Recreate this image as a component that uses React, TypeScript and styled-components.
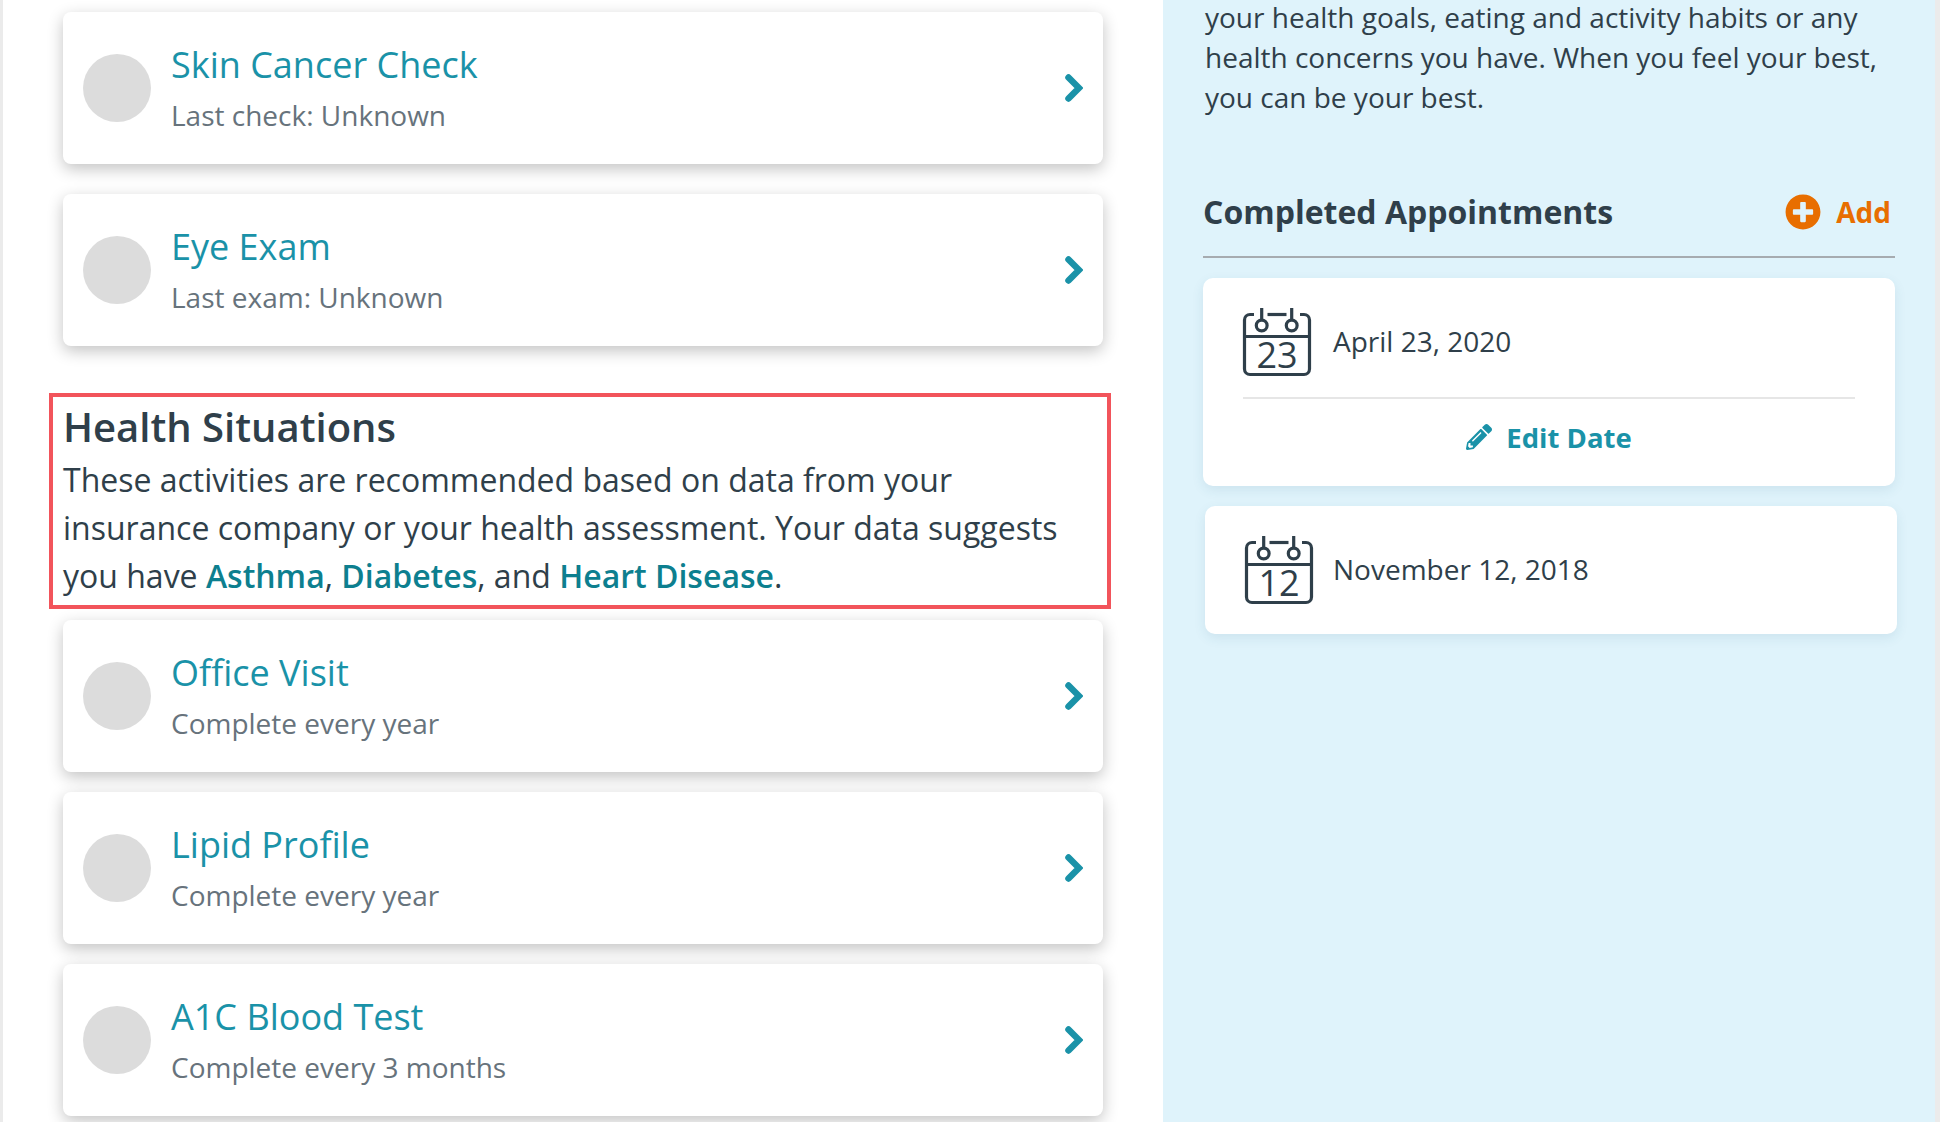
import React from 'react';
import styled, { createGlobalStyle } from 'styled-components';
import { FaPencilAlt, FaPlusCircle } from 'react-icons/fa';

const GlobalStyle = createGlobalStyle`
  html, body {
    margin: 0;
    padding: 0;
    height: 1122px;
    overflow: hidden;
    background: #ffffff;
  }
  * {
    box-sizing: border-box;
  }
`;

interface Activity {
  title: string;
  note: string;
}

interface Appointment {
  day: string;
  date: string;
  editable?: boolean;
}

const screenings: Activity[] = [
  { title: 'Skin Cancer Check', note: 'Last check: Unknown' },
  { title: 'Eye Exam', note: 'Last exam: Unknown' },
];

const situations: Activity[] = [
  { title: 'Office Visit', note: 'Complete every year' },
  { title: 'Lipid Profile', note: 'Complete every year' },
  { title: 'A1C Blood Test', note: 'Complete every 3 months' },
];

const appointments: Appointment[] = [
  { day: '23', date: 'April 23, 2020', editable: true },
  { day: '12', date: 'November 12, 2018' },
];

function Chevron() {
  return (
    <ChevronIcon viewBox="0 0 18 28" aria-hidden="true">
      <polyline points="3.5,3.5 14,14 3.5,24.5" fill="none" stroke="#1a92a8" strokeWidth="6.5" strokeLinecap="round" strokeLinejoin="miter" />
    </ChevronIcon>
  );
}

function CalendarIcon({ day }: { day: string }) {
  return (
    <CalendarSvg viewBox="0 0 68 68" aria-hidden="true">
      <g fill="none" stroke="#2f3f4a" strokeWidth="3.2">
        <path d="M11 6.5H7a5.5 5.5 0 0 0-5.5 5.5v49A5.5 5.5 0 0 0 7 66.5h54a5.5 5.5 0 0 0 5.5-5.5V12A5.5 5.5 0 0 0 61 6.5h-4" />
        <path d="M24.5 6.5h19" />
        <path d="M1.5 28.5h65" />
        <path d="M18.7 0v12M48.7 0v12" />
        <circle cx="18.7" cy="17.5" r="5.4" />
        <circle cx="48.7" cy="17.5" r="5.4" />
      </g>
      <DayText x="34" y="60" textAnchor="middle">
        {day}
      </DayText>
    </CalendarSvg>
  );
}

function ActivityCard({ title, note }: Activity) {
  return (
    <Card>
      <Dot />
      <CardText>
        <CardTitle>{title}</CardTitle>
        <CardNote>{note}</CardNote>
      </CardText>
      <Chevron />
    </Card>
  );
}

export default function App(): JSX.Element {
  return (
    <>
      <GlobalStyle />
      <Page>
        <MainColumn>
          <ScreeningList>
            {screenings.map((item) => (
              <ActivityCard key={item.title} {...item} />
            ))}
          </ScreeningList>
          <Highlight>
            <SectionTitle>Health Situations</SectionTitle>
            <SectionText>
              These activities are recommended based on data from your insurance company or your health assessment. Your data suggests you have{' '}
              <Condition>Asthma</Condition>, <Condition>Diabetes</Condition>, and <Condition>Heart Disease</Condition>.
            </SectionText>
          </Highlight>
          <SituationList>
            {situations.map((item) => (
              <ActivityCard key={item.title} {...item} />
            ))}
          </SituationList>
        </MainColumn>
        <SidePanel>
          <Intro>your health goals, eating and activity habits or any health concerns you have. When you feel your best, you can be your best.</Intro>
          <PanelHeader>
            <PanelTitle>Completed Appointments</PanelTitle>
            <AddButton>
              <AddIcon />
              Add
            </AddButton>
          </PanelHeader>
          {appointments.map((item) => (
            <AppointmentCard key={item.date} $offset={!item.editable}>
              <AppointmentRow $offset={!item.editable}>
                <CalendarIcon day={item.day} />
                <AppointmentDate>{item.date}</AppointmentDate>
              </AppointmentRow>
              {item.editable && (
                <EditRow>
                  <EditIcon />
                  Edit Date
                </EditRow>
              )}
            </AppointmentCard>
          ))}
        </SidePanel>
      </Page>
    </>
  );
}

const Page = styled.div`
  display: flex;
  width: 1940px;
  height: 1122px;
  overflow: hidden;
  font-family: 'Open Sans', 'Noto Sans', sans-serif;
  color: #2f3f4a;
  border-right: 5px solid #ebebeb;
`;

const MainColumn = styled.div`
  width: 1163px;
  flex: none;
  border-left: 3px solid #ebebeb;
  padding-top: 12px;
  background: #ffffff;
`;

const ScreeningList = styled.div`
  display: flex;
  flex-direction: column;
  gap: 30px;
  margin-left: 60px;
  width: 1040px;
`;

const SituationList = styled.div`
  display: flex;
  flex-direction: column;
  gap: 20px;
  margin-left: 60px;
  margin-top: 11px;
  width: 1040px;
`;

const Card = styled.div`
  display: flex;
  align-items: center;
  height: 152px;
  padding: 0 20px;
  background: #ffffff;
  border-radius: 8px;
  box-shadow: 0 5px 16px rgba(0, 0, 0, 0.24);
`;

const Dot = styled.div`
  width: 68px;
  height: 68px;
  flex: none;
  border-radius: 50%;
  background: #dcdcdc;
`;

const CardText = styled.div`
  flex: 1;
  margin-left: 20px;
  padding-bottom: 2px;
`;

const CardTitle = styled.div`
  font-size: 36px;
  line-height: 48px;
  color: #1a92a8;
`;

const CardNote = styled.div`
  font-size: 28px;
  line-height: 38px;
  margin-top: 7px;
  color: #67737c;
`;

const ChevronIcon = styled.svg`
  width: 18px;
  height: 28px;
  flex: none;
`;

const Highlight = styled.section`
  width: 1062px;
  height: 216px;
  margin: 47px 0 0 46px;
  padding: 0 10px;
  border: 4px solid #f2545b;
`;

const SectionTitle = styled.h2`
  margin: 0;
  font-size: 40px;
  line-height: 59px;
  font-weight: 600;
  color: #2f3f4a;
`;

const SectionText = styled.p`
  margin: 0;
  font-size: 32px;
  line-height: 48px;
  color: #2f3f4a;
`;

const Condition = styled.span`
  font-weight: 600;
  color: #0d7f8f;
`;

const SidePanel = styled.aside`
  flex: 1;
  background: #dff3fb;
  padding: 0 40px;
`;

const Intro = styled.p`
  margin: -3px 0 0 2px;
  font-size: 28px;
  line-height: 40px;
  color: #2f3f4a;
`;

const PanelHeader = styled.div`
  display: flex;
  align-items: center;
  justify-content: space-between;
  height: 70px;
  margin-top: 71px;
  padding: 0 4px 20px 0;
  border-bottom: 2px solid #a6abb0;
`;

const PanelTitle = styled.h3`
  margin: 0;
  font-size: 32px;
  line-height: 44px;
  font-weight: 700;
  color: #2f3f4a;
`;

const AddButton = styled.div`
  display: flex;
  align-items: center;
  gap: 15px;
  font-size: 28px;
  font-weight: 700;
  color: #e86e00;
`;

const AddIcon = styled(FaPlusCircle)`
  width: 36px;
  height: 36px;
`;

const AppointmentCard = styled.div<{ $offset: boolean }>`
  margin: ${({ $offset }) => ($offset ? '20px -2px 0 2px' : '20px 0 0')};
  padding: 30px 40px ${({ $offset }) => ($offset ? '30px' : '0')};
  background: #ffffff;
  border-radius: 10px;
  box-shadow: 0 4px 12px rgba(40, 100, 130, 0.1);
`;

const AppointmentRow = styled.div<{ $offset: boolean }>`
  display: flex;
  align-items: center;
  gap: ${({ $offset }) => ($offset ? '20px' : '22px')};
`;

const CalendarSvg = styled.svg`
  width: 68px;
  height: 68px;
  flex: none;
  overflow: visible;
`;

const DayText = styled.text`
  font-family: 'Open Sans', sans-serif;
  font-size: 36px;
  fill: #2f3f4a;
`;

const AppointmentDate = styled.div`
  font-size: 28px;
  line-height: 40px;
  padding-bottom: 2px;
  color: #2f3f4a;
`;

const EditRow = styled.div`
  display: flex;
  align-items: center;
  justify-content: center;
  gap: 14px;
  height: 89px;
  margin-top: 21px;
  padding-bottom: 11px;
  border-top: 2px solid #e6e6e6;
  font-size: 27.5px;
  font-weight: 700;
  color: #1a92a8;
`;

const EditIcon = styled(FaPencilAlt)`
  width: 26px;
  height: 26px;
`;
